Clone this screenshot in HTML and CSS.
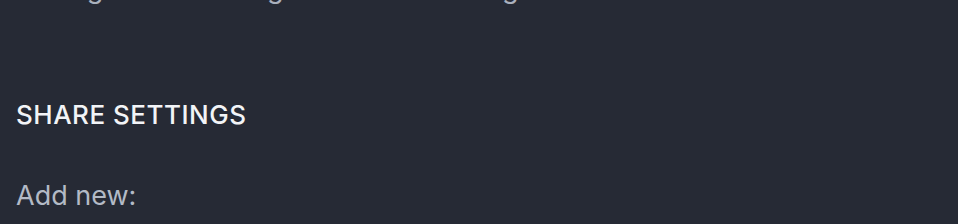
FILE: index.html
```html
<!DOCTYPE html>
<html lang="en">
<head>
    <meta charset="UTF-8">
    <meta name="viewport" content="width=device-width, initial-scale=1.0">
    <title>Share Settings</title>
    <link rel="stylesheet" href="styles.css">
</head>
<body>
    <div class="panel">
        <p class="intro">Manage item sharing rules of the listing.</p>

        <h2 class="section-title">SHARE SETTINGS</h2>

        <label class="field-label" for="newShare">Add new:</label>
    </div>
</body>
</html>
```

FILE: styles.css
```css
* {
    margin: 0;
    padding: 0;
    box-sizing: border-box;
}

body {
    font-family: 'Inter', 'Noto Sans', sans-serif;
    background: #262a35;
    min-height: 100vh;
    overflow: hidden;
}

.panel {
    padding: 0 16px;
}

.intro {
    margin-top: -29px;
    font-size: 27px;
    line-height: 36px;
    color: #aab1bd;
    white-space: nowrap;
}

.section-title {
    margin-top: 90px;
    font-size: 26px;
    font-weight: 500;
    letter-spacing: 0.5px;
    line-height: 36px;
    color: #f2f4f7;
}

.field-label {
    display: block;
    margin-top: 45px;
    font-size: 27px;
    line-height: 36px;
    color: #b3bac6;
}
```
